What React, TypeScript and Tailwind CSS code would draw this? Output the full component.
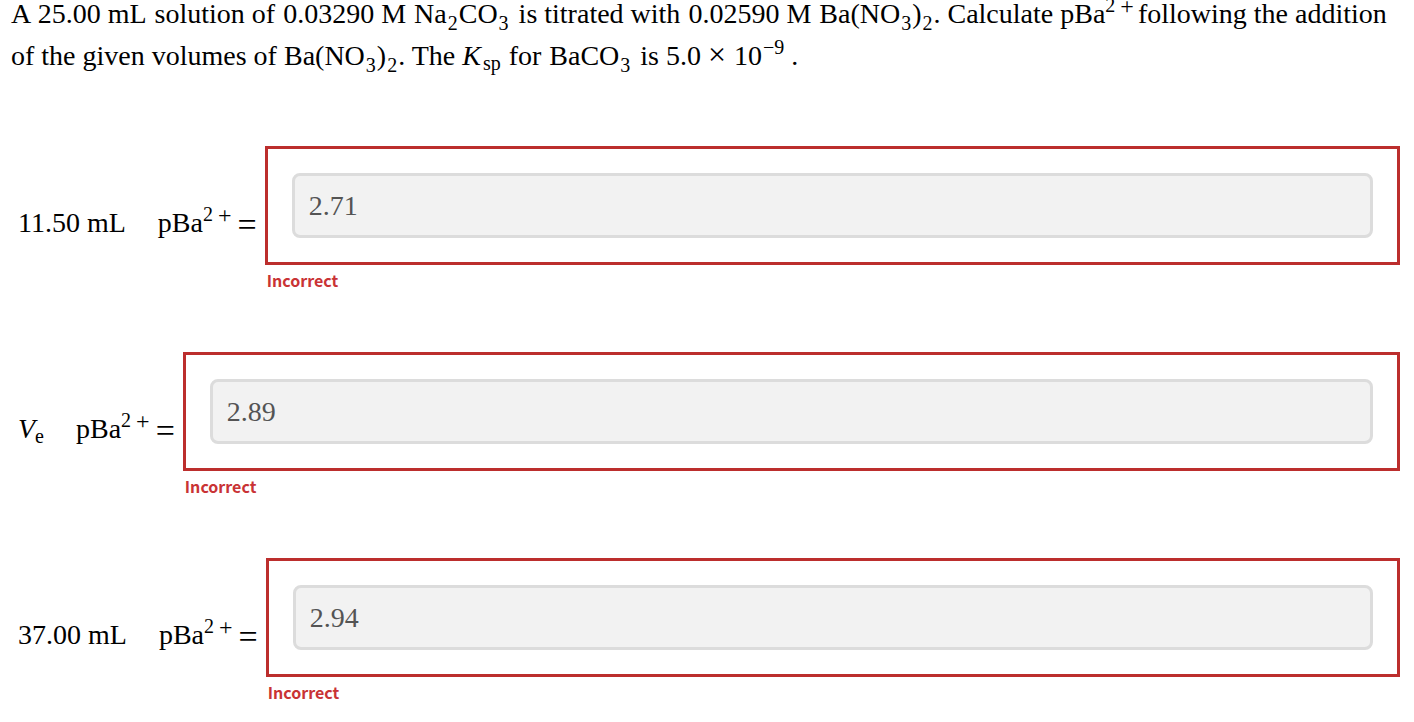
import React, { useState } from 'react';

interface ScriptProps {
    children: React.ReactNode;
}

interface AnswerRowProps {
    id: string;
    volume: React.ReactNode;
    initialValue: string;
}

// Counts inside a chemical formula
const Count: React.FC<ScriptProps> = ({ children }) => (
    <span className="mx-px align-[-7px] text-xl leading-none">{children}</span>
);

// Labels attached to a variable, set a little higher than counts
const Sub: React.FC<ScriptProps> = ({ children }) => (
    <span className="align-[-5px] text-xl leading-none">{children}</span>
);

const Sup: React.FC<ScriptProps> = ({ children }) => (
    <span className="align-[11px] text-xl leading-none">{children}</span>
);

const Amount: React.FC<ScriptProps> = ({ children }) => <span className="mx-px">{children}</span>;

const BariumNitrate: React.FC = () => (
    <span>
        Ba(NO<Count>3</Count>)<Count>2</Count>
    </span>
);

const PBa: React.FC = () => (
    <span>
        pBa<Sup>2 </Sup>
        <span className="align-[9px] text-2xl leading-none">+</span>
    </span>
);

const AnswerRow: React.FC<AnswerRowProps> = ({ id, volume, initialValue }) => {
    const [value, setValue] = useState(initialValue);

    return (
        <div className="flex items-center">
            <label htmlFor={id} className="shrink-0 pt-1 pl-[7px] pr-2 whitespace-nowrap">
                <span className="mr-8">{volume}</span>
                <PBa />
                <span className="ml-1.5 align-[-4px] text-[34px] leading-none">=</span>
            </label>
            <div className="min-w-0 flex-1">
                <div className="border-3 border-[#bc2e2d] p-6">
                    <input
                        id={id}
                        type="text"
                        value={value}
                        onChange={(e) => setValue(e.target.value)}
                        readOnly
                        aria-describedby={`${id}-feedback`}
                        className="block h-[65px] w-full rounded-lg border-3 border-[#dcdcdc] bg-[#f2f2f2] px-3.5 text-[#545454] outline-none"
                    />
                </div>
                <p
                    id={`${id}-feedback`}
                    className="px-0.5 font-['Noto_Sans_CJK_JP','Open_Sans',sans-serif] text-base/[31px] font-bold text-[#c93335]"
                >
                    Incorrect
                </p>
            </div>
        </div>
    );
};

const App: React.FC = () => {
    return (
        <main className="overflow-hidden bg-white pl-[11px] pr-3.5 font-['Liberation_Serif','Times_New_Roman',serif] text-[28px] text-black">
            <p className="-mt-[7px] mb-[69px] leading-[42px]">
                A <Amount>25.00 mL</Amount> solution of <Amount>0.03290 M</Amount> Na<Count>2</Count>CO
                <Count>3</Count>
                <span className="ml-0.5"> is titrated with </span>
                <Amount>0.02590 M</Amount> <BariumNitrate />. Calculate <PBa />
                <span className="ml-1">following</span> the addition of the given volumes of <BariumNitrate />. The{' '}
                <i>K</i>
                <span className="ml-0.5">
                    <Sub>sp</Sub>
                </span>{' '}
                <Amount>for</Amount> BaCO<Count>3</Count>
                <span className="ml-0.5"> is 5.0 </span>
                <span className="text-[32px] leading-none">×</span> <Amount>10</Amount>
                <Sup>−9</Sup> .
            </p>
            <div className="flex flex-col gap-14">
                <AnswerRow id="volume-1150" volume="11.50 mL" initialValue="2.71" />
                <AnswerRow
                    id="volume-equivalence"
                    volume={
                        <>
                            <i>V</i>
                            <Sub>e</Sub>
                        </>
                    }
                    initialValue="2.89"
                />
                <AnswerRow id="volume-3700" volume="37.00 mL" initialValue="2.94" />
            </div>
        </main>
    );
};

export default App;
